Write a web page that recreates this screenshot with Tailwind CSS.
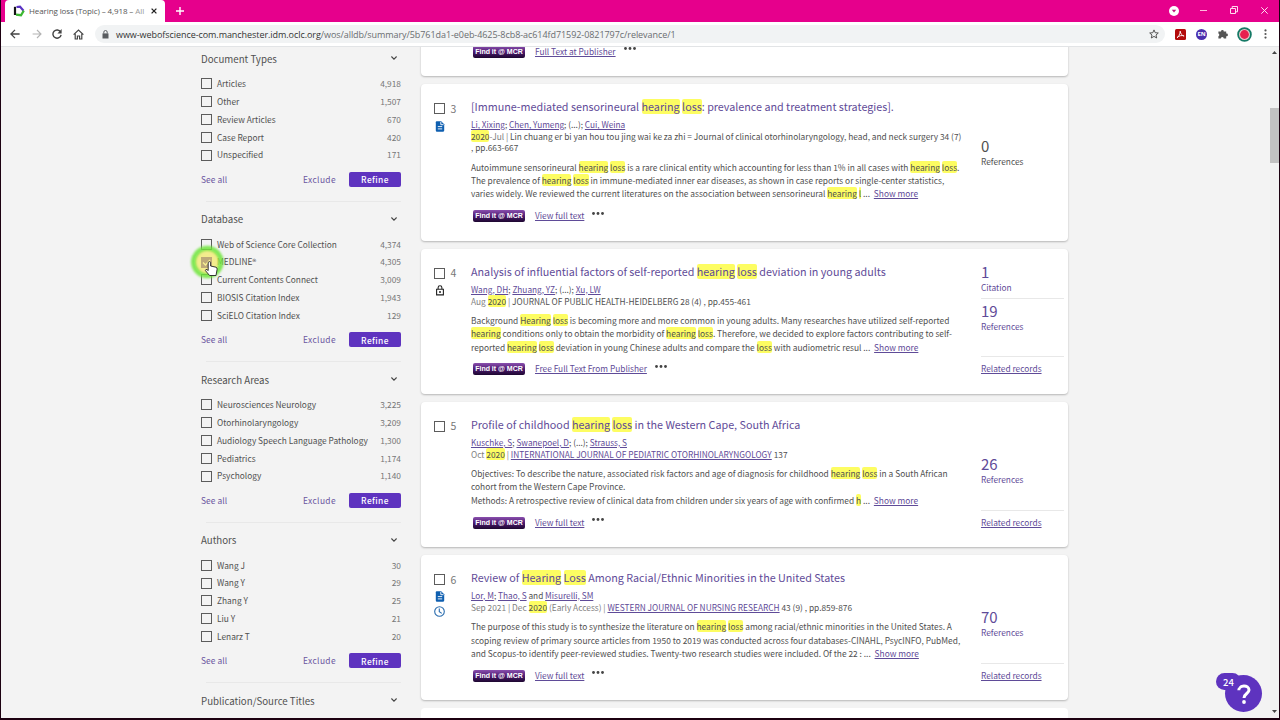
<!DOCTYPE html>
<html lang="en">
<head>
    <meta charset="UTF-8">
    <meta name="viewport" content="width=device-width, initial-scale=1.0">
    <title>Hearing loss (Topic) – 4,918 – All Databases</title>
    <script src="https://cdn.jsdelivr.net/npm/@tailwindcss/browser@4"></script>
</head>
<body class="w-[1280px] h-[720px] overflow-hidden bg-[#1c0010] pl-px pr-px pb-[2px] flex flex-col font-['Noto_Sans_CJK_SC','Open_Sans',sans-serif] text-[#505050]">

    <!-- tab strip -->
    <div class="h-[22px] shrink-0 bg-[#e6008c] flex font-['Open_Sans',sans-serif]">
        <div class="ml-[4px] w-[160px] h-[22px] bg-white rounded-t-[4px] flex items-center pl-[8px]">
            <svg class="w-[12px] h-[12px] shrink-0" viewBox="0 0 12 12" fill="none" stroke-width="2.2">
                <path d="M2 1.8V10" stroke="#151515"/>
                <path d="M3.5 2L7 1.6L10.5 5.8" stroke="#5a34c4"/>
                <path d="M10.8 5.6L8 10.2L3 9.6" stroke="#3cb832"/>
            </svg>
            <div class="ml-[4px] w-[115px] whitespace-nowrap text-[8px] leading-[12px] tracking-[-0.1px] text-[#555]">Hearing loss (Topic) – 4,918 – <span class="text-[#999]">All</span></div>
            <svg class="ml-[7px] w-[6px] h-[6px] shrink-0" viewBox="0 0 6 6" stroke="#222" stroke-width="1.3"><path d="M.6 .6L5.4 5.4M5.4 .6L.6 5.4"/></svg>
        </div>
        <svg class="ml-[11px] mt-[7px] w-[8px] h-[8px]" viewBox="0 0 8 8" stroke="#fff" stroke-width="1.4"><path d="M4 0V8M0 4H8"/></svg>
        <div class="ml-auto flex items-center pr-[11px] pb-[2px]">
            <svg class="mt-[2px] w-[10px] h-[10px]" viewBox="0 0 10 10"><circle cx="5" cy="5" r="5" fill="#fff"/><path d="M2.8 3.8H7.2L5 6.6Z" fill="#c0107c"/></svg>
            <svg class="ml-[21px] w-[7px] h-[7px]" viewBox="0 0 7 7" stroke="#fbd" stroke-width="1"><path d="M0 3.5H7"/></svg>
            <svg class="ml-[23px] w-[8px] h-[8px]" viewBox="0 0 8 8" fill="none" stroke="#fde" stroke-width="1"><path d="M.5 2.5H5.5V7.5H.5ZM2.2 2.3V.5H7.5V5.8H5.8"/></svg>
            <svg class="ml-[23px] w-[7px] h-[7px]" viewBox="0 0 7 7" stroke="#fde" stroke-width="1"><path d="M.3 .3L6.7 6.7M6.7 .3L.3 6.7"/></svg>
        </div>
    </div>

    <!-- address bar -->
    <div class="h-[25px] shrink-0 bg-white border-b border-[#e2e4e6] flex items-center pl-[9px] pr-[12px] font-['Open_Sans',sans-serif]">
        <svg class="w-[10px] h-[10px]" viewBox="0 0 10 10" fill="none" stroke="#444" stroke-width="1.3"><path d="M9.6 5H1M5 .9L.9 5L5 9.1"/></svg>
        <svg class="ml-[12px] w-[10px] h-[10px]" viewBox="0 0 10 10" fill="none" stroke="#b4b4b4" stroke-width="1.1"><path d="M.6 5H9M5 1L9 5L5 9"/></svg>
        <svg class="ml-[10px] w-[10px] h-[10px]" viewBox="0 0 10 10" fill="none" stroke="#444" stroke-width="1.4"><path d="M8.6 3A4.1 4.1 0 1 0 9.1 5.8"/><path d="M9.6 0V4.4H5.4Z" fill="#444" stroke="none"/></svg>
        <svg class="ml-[11px] w-[11px] h-[11px]" viewBox="0 0 11 11" fill="none" stroke="#444" stroke-width="1.2"><path d="M.6 5.6L5.5 1L10.4 5.6M2.2 4.8V10H4.4V7H6.6V10H8.8V4.8"/></svg>
        <div class="ml-[11px] flex-1 h-[18px] rounded-full bg-[#f1f3f4] flex items-center pl-[7px] pr-[6px]">
            <svg class="w-[7px] h-[9px]" viewBox="0 0 7 9"><path d="M.5 3.4H6.5V8.5H.5Z" fill="#5a5d61"/><path d="M1.8 3.6V2.2A1.7 1.7 0 0 1 5.2 2.2V3.6" fill="none" stroke="#5a5d61"/></svg>
            <span class="ml-[7px] mt-px whitespace-nowrap text-[9px] leading-[14px] tracking-[-0.06px] text-[#6a6d70]"><span class="text-[#333]">www-webofscience-com.manchester.idm.oclc.org</span>/wos/alldb/summary/5b761da1-e0eb-4625-8cb8-ac614fd71592-0821797c/relevance/1</span>
            <svg class="ml-auto w-[10px] h-[10px]" viewBox="0 0 10 10" fill="none" stroke="#555" stroke-width="1"><path d="M5 .9L6.2 3.7L9.3 4L7 6L7.7 9L5 7.4L2.3 9L3 6L.7 4L3.8 3.7Z"/></svg>
        </div>
        <svg class="ml-[10px] w-[11px] h-[11px]" viewBox="0 0 11 11"><rect width="11" height="11" rx="1.5" fill="#b30b0b"/><path d="M5.3 2C4.8 5.4 3.6 8 2 8.8M2 8.6C4 6.6 7 6 9.2 7M5.2 2.3C5.6 4.8 7 6.4 8.8 7" fill="none" stroke="#fff" stroke-width=".9"/></svg>
        <div class="ml-[10px] w-[11px] h-[11px] rounded-full bg-[#4a2fae] text-white text-[6px] leading-[11px] text-center font-bold">EN</div>
        <svg class="ml-[11px] w-[10px] h-[10px]" viewBox="0 0 10 10" fill="#555"><path d="M.4 2.4H3A1.35 1.35 0 1 1 5.8 2.4H8.2V4.6A1.35 1.35 0 1 1 8.2 7.2V9.6H5.8A1.5 1.5 0 0 0 2.8 9.6H.4V7.2A1.4 1.4 0 0 0 .4 4.6Z"/></svg>
        <svg class="ml-[9px] w-[15px] h-[15px]" viewBox="0 0 15 15"><circle cx="7.5" cy="7.5" r="6.4" fill="#e8c8c8" stroke="#157a66" stroke-width="1.8"/><circle cx="7.5" cy="7.5" r="4.4" fill="#e8204e"/></svg>
        <svg class="ml-[12px] w-[3px] h-[10px]" viewBox="0 0 3 10" fill="#555"><circle cx="1.5" cy="1.4" r="1.1"/><circle cx="1.5" cy="5" r="1.1"/><circle cx="1.5" cy="8.6" r="1.1"/></svg>
    </div>

    <!-- page -->
    <div class="relative flex-1 min-h-0 overflow-hidden bg-[#f3f3f3] flex items-start">
        <aside id="filters" class="ml-[200px] mt-[-7px] w-[200px] shrink-0"></aside>
        <main id="results" class="ml-[20px] mt-[-116px] w-[647px] shrink-0 flex flex-col gap-[7.8px]"></main>

        <!-- scrollbar -->
        <div class="ml-auto w-[9px] h-[671px] bg-[#f1f1f1] flex flex-col items-center">
            <svg class="mt-[4px] w-[5px] h-[3px]" viewBox="0 0 5 3" fill="#444"><path d="M0 3L2.5 0L5 3Z"/></svg>
            <div class="mt-[54px] w-[9px] h-[55px] bg-[#c1c1c1]"></div>
            <svg class="mt-auto mb-[5px] w-[5px] h-[3px]" viewBox="0 0 5 3" fill="#444"><path d="M0 0L2.5 3L5 0Z"/></svg>
        </div>

        <!-- mouse pointer with its highlight ring -->
        <svg class="absolute left-[188px] top-[195px] w-[40px] h-[40px]" viewBox="0 0 40 40">
            <circle cx="18.3" cy="20" r="12.5" fill="#f5e84a" fill-opacity=".6"/>
            <circle cx="18.3" cy="20" r="13.8" fill="none" stroke="#6ee53a" stroke-opacity=".85" stroke-width="5" class="blur-[1px]"/>
            <path d="M19.2 20.3Q20.5 19 21.6 20.3V24L27 25.2Q28.4 25.8 28.1 27.4L27 33.5H20.6L16.4 28.6Q16.6 27 18 27.6L19.2 28.6Z" fill="#fff" stroke="#222" stroke-width=".9"/>
        </svg>

        <!-- help button -->
        <div class="absolute left-[1224px] top-[628px] w-[37px] h-[37px] rounded-full bg-[#5e33bf] flex items-center justify-center">
            <svg class="w-[14px] h-[20px]" viewBox="0 0 14 20" fill="none" stroke="#fff" stroke-width="3"><path d="M1.8 6.2C1.8 .6 12 .4 12 6C12 9.6 7 9.4 7 14"/><circle cx="7" cy="18" r="1.9" fill="#fff" stroke="none"/></svg>
        </div>
        <div class="absolute left-[1215px] top-[626px] w-[25px] h-[17px] rounded-full bg-[#5e33bf] text-white text-[9.5px] leading-[18px] text-center font-medium">24</div>
    </div>

    <script>
        const filters = [
            { name: 'Document Types', rows: [['Articles', '4,918'], ['Other', '1,507'], ['Review Articles', '670'], ['Case Report', '420'], ['Unspecified', '171']] },
            { name: 'Database', rows: [['Web of Science Core Collection', '4,374'], ['MEDLINE®', '4,305', true], ['Current Contents Connect', '3,009'], ['BIOSIS Citation Index', '1,943'], ['SciELO Citation Index', '129']] },
            { name: 'Research Areas', rows: [['Neurosciences Neurology', '3,225'], ['Otorhinolaryngology', '3,209'], ['Audiology Speech Language Pathology', '1,300'], ['Pediatrics', '1,174'], ['Psychology', '1,140']] },
            { name: 'Authors', rows: [['Wang J', '30'], ['Wang Y', '29'], ['Zhang Y', '25'], ['Liu Y', '21'], ['Lenarz T', '20']] },
            { name: 'Publication/Source Titles', rows: [] }
        ];

        // [word] is a highlighted search term, _text_ is a link, ~text~ is grey
        const results = [
            { n: '', link: 'Full Text at Publisher', metrics: [], icons: [] },
            {
                n: 3, icons: ['doc'],
                title: '&#91;Immune-mediated sensorineural [hearing] [loss]: prevalence and treatment strategies&#93;.',
                authors: '_Li, Xixing_; _Chen, Yumeng_; (...); _Cui, Weina_',
                source: ['[2020]~-Jul |~ Lin chuang er bi yan hou tou jing wai ke za zhi = Journal of clinical otorhinolaryngology, head, and neck surgery 34 (7)', ', pp.663-667'],
                abstract: [
                    'Autoimmune sensorineural [hearing] [loss] is a rare clinical entity which accounting for less than 1% in all cases with [hearing] [loss].',
                    'The prevalence of [hearing] [loss] in immune-mediated inner ear diseases, as shown in case reports or single-center statistics,',
                    'varies widely. We reviewed the current literatures on the association between sensorineural [hearing] [l]'
                ],
                link: 'View full text', metrics: [['0', 'References']]
            },
            {
                n: 4, icons: ['lock'],
                title: 'Analysis of influential factors of self-reported [hearing] [loss] deviation in young adults',
                authors: '_Wang, DH_; _Zhuang, YZ_; (...); _Xu, LW_',
                source: ['~Aug~ [2020] ~|~ JOURNAL OF PUBLIC HEALTH-HEIDELBERG 28 (4) , pp.455-461'],
                abstract: [
                    'Background [Hearing] [loss] is becoming more and more common in young adults. Many researches have utilized self-reported',
                    '[hearing] conditions only to obtain the morbidity of [hearing] [loss]. Therefore, we decided to explore factors contributing to self-',
                    'reported [hearing] [loss] deviation in young Chinese adults and compare the [loss] with audiometric resul'
                ],
                link: 'Free Full Text From Publisher', metrics: [['1', 'Citation'], ['19', 'References']], related: true
            },
            {
                n: 5, icons: [],
                title: 'Profile of childhood [hearing] [loss] in the Western Cape, South Africa',
                authors: '_Kuschke, S_; _Swanepoel, D_; (...); _Strauss, S_',
                source: ['~Oct~ [2020] ~|~ _INTERNATIONAL JOURNAL OF PEDIATRIC OTORHINOLARYNGOLOGY_ 137'],
                abstract: [
                    'Objectives: To describe the nature, associated risk factors and age of diagnosis for childhood [hearing] [loss] in a South African',
                    'cohort from the Western Cape Province.',
                    'Methods: A retrospective review of clinical data from children under six years of age with confirmed [h]'
                ],
                link: 'View full text', metrics: [['26', 'References']], related: true
            },
            {
                n: 6, icons: ['doc', 'clock'],
                title: 'Review of [Hearing] [Loss] Among Racial/Ethnic Minorities in the United States',
                authors: '_Lor, M_; _Thao, S_ and _Misurelli, SM_',
                source: ['~Sep 2021 | Dec~ [2020] ~(Early Access) |~ _WESTERN JOURNAL OF NURSING RESEARCH_ 43 (9) , pp.859-876'],
                abstract: [
                    'The purpose of this study is to synthesize the literature on [hearing] [loss] among racial/ethnic minorities in the United States. A',
                    'scoping review of primary source articles from 1950 to 2019 was conducted across four databases-CINAHL, PsycINFO, PubMed,',
                    'and Scopus-to identify peer-reviewed studies. Twenty-two research studies were included. Of the 22 :'
                ],
                link: 'View full text', metrics: [['70', 'References']], related: true
            }
        ];

        const icons = {
            doc: `<svg class="w-[10px] h-[11px]" viewBox="0 0 10 11"><path d="M1.6 .3H6.2L9.2 3.3V9.6Q9.2 10.7 8.2 10.7H1.6Q.8 10.7 .8 9.6V1.3Q.8 .3 1.6 .3Z" fill="#0f5fb0"/><path d="M2.8 5.6H7.2M2.8 7.9H7.2M5.8 .9V3.7H8.6" stroke="#fff" stroke-width=".9" fill="none"/></svg>`,
            lock: `<svg class="w-[10px] h-[11px]" viewBox="0 0 10 11" fill="none" stroke="#222" stroke-width="1.1"><path d="M1.6 4.3H8.4V9.9H1.6ZM3.1 4.2V2.7A1.9 1.9 0 0 1 6.9 2.7V4.2"/><circle cx="5" cy="7.1" r="1" fill="#222" stroke="none"/></svg>`,
            clock: `<svg class="w-[11px] h-[11px]" viewBox="0 0 11 11" fill="none" stroke="#2a6cae" stroke-width="1.1"><circle cx="5.5" cy="5.5" r="4.8"/><path d="M5.3 2.6V5.8L7.8 7.4"/></svg>`
        };

        // links and colours go in after the terms so their class names are left alone
        function rich(text = '') {
            return text
                .replace(/\[([A-Za-z0-9]+)\]/g, '<mark>$1</mark>')
                .replace(/~([^~]+)~/g, '<span class="text-[#808080]">$1</span>')
                .replace(/_([^_]+)_/g, '<a class="text-[#5f4b98] underline underline-offset-1">$1</a>')
                .replace(/<mark>/g, '<mark class="bg-[#fdfd62] text-inherit rounded-[2px]">');
        }

        document.getElementById('filters').innerHTML = filters.map(group => `
            <section class="h-[160.5px]">
                <div class="ml-[5px] h-px bg-[#e8e8e8]"></div>
                <div class="h-[34px] flex items-center justify-between pr-[4px]">
                    <h3 class="mt-px text-[9.7px] leading-[16px]">${group.name}</h3>
                    <svg class="w-[6px] h-[4px]" viewBox="0 0 6 4" fill="none" stroke="#444" stroke-width="1.1"><path d="M.4 .5L3 3.1L5.6 .5"/></svg>
                </div>
                ${group.rows.map(([label, count, checked]) => `
                <label class="h-[17.8px] flex items-center text-[8.36px] leading-[12px] whitespace-nowrap">
                    <span class="w-[11px] h-[11px] shrink-0 border-[1.5px] ${checked ? 'border-[#6b4fc0] bg-[#6b4fc0]' : 'border-[#5c5c5c]'}">${checked ? '<svg viewBox="0 0 9 9" fill="none" stroke="#fff" stroke-width="1.3"><path d="M1 4.5L3.5 7L8 2"/></svg>' : ''}</span>
                    <span class="ml-[5px] mb-[1.5px]">${label}</span>
                    <span class="ml-auto mb-[1.5px] text-[#777]">${count}</span>
                </label>`).join('')}
                ${group.rows.length ? `
                <div class="h-[31px] flex items-center text-[8.4px] leading-[12px] tracking-[0.1px] text-[#6a559f]">
                    <span class="mb-px">See all</span>
                    <span class="ml-auto mb-px tracking-[0.4px]">Exclude</span>
                    <button class="ml-[13px] w-[52px] h-[15px] rounded-[2px] bg-[#5e33bf] text-white font-medium tracking-[0.4px]">Refine</button>
                </div>` : ''}
            </section>`).join('');

        document.getElementById('results').innerHTML = results.map(r => `
            <article class="bg-white rounded-[4px] shadow-[0_1px_2px_rgba(0,0,0,0.25)] pt-[15px] pb-[18.5px] pl-[13.4px] pr-[4px] flex whitespace-nowrap">
                <div class="w-[36.6px] shrink-0">
                    <div class="h-[19px] flex items-center gap-[5px] text-[10.5px] text-[#777]"><span class="w-[11px] h-[11px] border-[1.5px] border-[#5c5c5c]"></span>${r.n}</div>
                    <div class="mt-[2.5px] w-[11px] flex flex-col items-center gap-[4px]">${r.icons.map(i => icons[i]).join('')}</div>
                </div>
                <div class="w-[510px] shrink-0 -mt-px">
                    <h2 class="h-[18px] text-[10.76px] leading-[18px] text-[#5f4b98]">${rich(r.title)}</h2>
                    <div class="mt-[2px] h-[13px] text-[8.25px] leading-[13px]">${rich(r.authors)}</div>
                    <div class="text-[8.34px] leading-[11.2px]">${(r.source || ['']).map(s => `<div class="h-[11.2px]">${rich(s)}</div>`).join('')}</div>
                    <div class="mt-[7.3px] h-[39.9px] text-[8.37px] leading-[13.3px]">${(r.abstract || []).map((s, i) => `<div class="h-[13.3px]">${rich(s)}${i == 2 ? ' ... <a class="ml-[2px] text-[#5f4b98] underline underline-offset-1">Show more</a>' : ''}</div>`).join('')}</div>
                    <div class="mt-[9.5px] h-[12px] flex items-center">
                        <span class="ml-[2px] w-[52px] h-[12px] rounded-[2px] bg-linear-to-b from-[#8a4fae] via-[#4f1b72] to-[#1d0730] text-white text-center text-[7px] leading-[11px] font-bold font-['Liberation_Sans',sans-serif]">Find it @ MCR</span>
                        <a class="ml-[10px] mb-[2px] text-[8.36px] leading-[12px] text-[#5f4b98] underline underline-offset-1">${r.link}</a>
                        <svg class="ml-[8px] mb-[6px] w-[12px] h-[3px]" viewBox="0 0 12 3" fill="#444"><circle cx="1.5" cy="1.5" r="1.4"/><circle cx="6" cy="1.5" r="1.4"/><circle cx="10.5" cy="1.5" r="1.4"/></svg>
                    </div>
                </div>
                <div class="flex-1 flex flex-col -mt-px ${r.metrics.length == 2 ? '' : r.related ? 'pt-[39px]' : 'pt-[39px]'} ${r.related ? 'text-[#5f4b98]' : ''}">
                    ${r.metrics.map(([value, label], i) => `
                    <div class="${i ? 'mt-[5px] pt-[3px] border-t border-[#e8e8e8]' : ''}">
                        <div class="text-[15px] leading-[17px]">${value}</div>
                        <div class="mt-px text-[8.36px] leading-[12px]">${label}</div>
                    </div>`).join('')}
                    ${r.related ? '<div class="mt-auto mb-px border-t border-[#e8e8e8] pt-[5px] text-[8.36px] leading-[12px]"><a class="underline underline-offset-1">Related records</a></div>' : ''}
                </div>
            </article>`).join('') + '<article class="h-[145px] bg-white rounded-[4px]"></article>';
    </script>
</body>
</html>
